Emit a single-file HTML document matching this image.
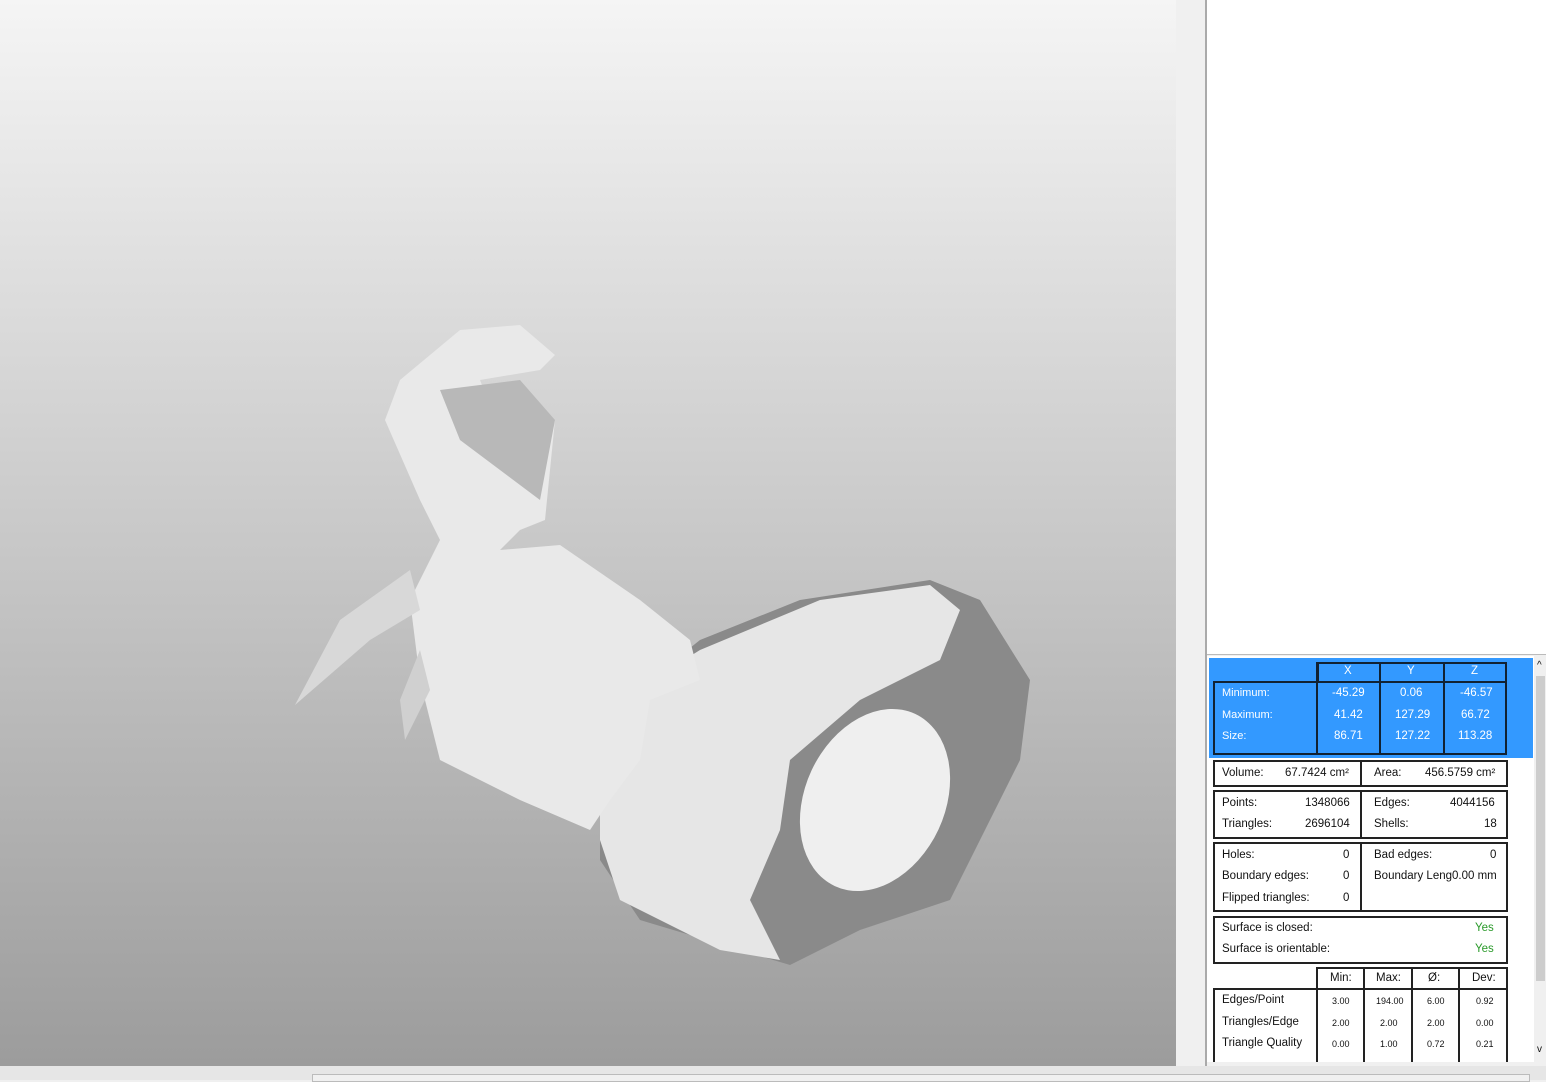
<!DOCTYPE html><html><head><style>
body{margin:0;width:1546px;height:1080px;overflow:hidden;position:relative;font-family:"Liberation Sans",sans-serif;font-size:11.5px;background:#f0f0f0}
.a{position:absolute}
.bx{position:absolute;border:2px solid #222;box-sizing:border-box;background:#fff}
.t{position:absolute;white-space:nowrap;color:#111}
.w{color:#fff}
.g{color:#2a9a2a}
.s{font-size:9px}
</style></head><body>
<div class="a" style="left:0;top:0;width:1176px;height:1066px;background:linear-gradient(#f5f5f5,#d6d6d6 35%,#9c9c9c)"></div>
<svg class="a" style="left:0;top:0" width="1176" height="1066">
<path d="M700 640 L800 600 L930 580 L980 600 L1030 680 L1020 760 L950 900 L860 930 L790 965 L640 920 L600 860 L600 760 L650 680Z" fill="#8a8a8a"/>
<path d="M620 700 L700 650 L820 600 L930 585 L960 610 L940 660 L860 700 L790 760 L780 830 L750 900 L780 960 L720 950 L620 900 L600 840 L600 760Z" fill="#e6e6e6"/>
<ellipse cx="875" cy="800" rx="70" ry="95" transform="rotate(25 875 800)" fill="#efefef"/>
<path d="M460 330 L520 325 L555 355 L540 370 L480 380 L500 430 L555 420 L545 520 L520 530 L500 550 L560 545 L640 600 L690 640 L700 680 L650 700 L640 760 L610 800 L590 830 L520 800 L440 760 L420 680 L410 600 L440 540 L420 500 L385 420 L400 380Z" fill="#e9e9e9"/>
<path d="M410 570 L340 620 L295 705 L370 640 L420 610Z" fill="#d8d8d8"/>
<path d="M420 650 L400 700 L405 740 L430 690Z" fill="#d0d0d0"/>
<path d="M440 390 L520 380 L555 420 L540 500 L500 470 L460 440Z" fill="#b8b8b8"/>
</svg>
<div class="a" style="left:1176px;top:0;width:30px;height:1066px;background:#f0f0f0"></div>
<div class="a" style="left:1205px;top:0;width:2px;height:1066px;background:#aaa"></div>
<div class="a" style="left:1207px;top:0;width:339px;height:654px;background:#fff;border-bottom:1px solid #bbb"></div>
<div class="a" style="left:1207px;top:656px;width:327px;height:406px;background:#fff"></div>
<div class="a" style="left:1534px;top:656px;width:12px;height:406px;background:#f0f0f0"></div>
<div class="a" style="left:1536px;top:676px;width:9px;height:305px;background:#cdcdcd"></div>
<div class="t" style="left:1537px;top:660px;font-size:10px">^</div>
<div class="t" style="left:1537px;top:1044px;font-size:10px">v</div>
<div class="a" style="left:0;top:1066px;width:1546px;height:14px;background:#e6e6e6"></div>
<div class="a" style="left:312px;top:1074px;width:1216px;height:6px;border:1px solid #bbb;background:#f0f0f0"></div>
<div class="a" style="left:1209px;top:658px;width:324px;height:100px;background:#3399ff"></div>
<div class="a" style="left:1317px;top:662px;width:190px;height:21px;border:2px solid #123;box-sizing:border-box"></div>
<div class="a" style="left:1213px;top:681px;width:294px;height:74px;border:2px solid #123;box-sizing:border-box"></div>
<div class="a" style="left:1316px;top:662px;width:2px;height:93px;background:#123"></div>
<div class="a" style="left:1379px;top:662px;width:2px;height:93px;background:#123"></div>
<div class="a" style="left:1443px;top:662px;width:2px;height:93px;background:#123"></div>
<div class="t w" style="left:1344px;top:665px">X</div><div class="t w" style="left:1407px;top:665px">Y</div><div class="t w" style="left:1471px;top:665px">Z</div>
<div class="t w" style="left:1222px;top:687px;font-size:11px">Minimum:</div><div class="t w" style="left:1222px;top:709px;font-size:11px">Maximum:</div><div class="t w" style="left:1222px;top:730px;font-size:11px">Size:</div>
<div class="t w" style="left:1332px;top:687px">-45.29</div><div class="t w" style="left:1400px;top:687px">0.06</div><div class="t w" style="left:1460px;top:687px">-46.57</div>
<div class="t w" style="left:1334px;top:709px">41.42</div><div class="t w" style="left:1395px;top:709px">127.29</div><div class="t w" style="left:1461px;top:709px">66.72</div>
<div class="t w" style="left:1334px;top:730px">86.71</div><div class="t w" style="left:1395px;top:730px">127.22</div><div class="t w" style="left:1458px;top:730px">113.28</div>
<div class="bx" style="left:1213px;top:760px;width:295px;height:27px"></div><div class="a" style="left:1360px;top:760px;width:2px;height:27px;background:#222"></div>
<div class="t" style="left:1222px;top:767px">Volume:</div><div class="t" style="left:1285px;top:767px">67.7424 cm²</div>
<div class="t" style="left:1374px;top:767px">Area:</div><div class="t" style="left:1425px;top:767px">456.5759 cm²</div>
<div class="bx" style="left:1213px;top:790px;width:295px;height:49px"></div><div class="a" style="left:1360px;top:790px;width:2px;height:49px;background:#222"></div>
<div class="t" style="left:1222px;top:797px">Points:</div><div class="t" style="left:1305px;top:797px">1348066</div><div class="t" style="left:1374px;top:797px">Edges:</div><div class="t" style="left:1450px;top:797px">4044156</div>
<div class="t" style="left:1222px;top:818px">Triangles:</div><div class="t" style="left:1305px;top:818px">2696104</div><div class="t" style="left:1374px;top:818px">Shells:</div><div class="t" style="left:1484px;top:818px">18</div>
<div class="bx" style="left:1213px;top:842px;width:295px;height:70px"></div><div class="a" style="left:1360px;top:842px;width:2px;height:70px;background:#222"></div>
<div class="t" style="left:1222px;top:849px">Holes:</div><div class="t" style="left:1343px;top:849px">0</div><div class="t" style="left:1374px;top:849px">Bad edges:</div><div class="t" style="left:1490px;top:849px">0</div>
<div class="t" style="left:1222px;top:870px">Boundary edges:</div><div class="t" style="left:1343px;top:870px">0</div><div class="t" style="left:1374px;top:870px">Boundary Leng0.00 mm</div>
<div class="t" style="left:1222px;top:892px">Flipped triangles:</div><div class="t" style="left:1343px;top:892px">0</div>
<div class="bx" style="left:1213px;top:916px;width:295px;height:48px"></div>
<div class="t" style="left:1222px;top:922px">Surface is closed:</div><div class="t g" style="left:1475px;top:922px">Yes</div>
<div class="t" style="left:1222px;top:943px">Surface is orientable:</div><div class="t g" style="left:1475px;top:943px">Yes</div>
<div class="a" style="left:1316px;top:967px;width:192px;height:23px;border:2px solid #222;box-sizing:border-box"></div>
<div class="a" style="left:1213px;top:988px;width:295px;height:78px;border:2px solid #222;border-bottom:none;box-sizing:border-box"></div>
<div class="a" style="left:1316px;top:967px;width:2px;height:95px;background:#222"></div>
<div class="a" style="left:1363px;top:967px;width:2px;height:95px;background:#222"></div>
<div class="a" style="left:1411px;top:967px;width:2px;height:95px;background:#222"></div>
<div class="a" style="left:1458px;top:967px;width:2px;height:95px;background:#222"></div>
<div class="t" style="left:1330px;top:972px">Min:</div><div class="t" style="left:1376px;top:972px">Max:</div><div class="t" style="left:1428px;top:972px">Ø:</div><div class="t" style="left:1472px;top:972px">Dev:</div>
<div class="t" style="left:1222px;top:994px">Edges/Point</div><div class="t s" style="left:1332px;top:996px">3.00</div><div class="t s" style="left:1376px;top:996px">194.00</div><div class="t s" style="left:1427px;top:996px">6.00</div><div class="t s" style="left:1476px;top:996px">0.92</div>
<div class="t" style="left:1222px;top:1016px">Triangles/Edge</div><div class="t s" style="left:1332px;top:1018px">2.00</div><div class="t s" style="left:1380px;top:1018px">2.00</div><div class="t s" style="left:1427px;top:1018px">2.00</div><div class="t s" style="left:1476px;top:1018px">0.00</div>
<div class="t" style="left:1222px;top:1037px">Triangle Quality</div><div class="t s" style="left:1332px;top:1039px">0.00</div><div class="t s" style="left:1380px;top:1039px">1.00</div><div class="t s" style="left:1427px;top:1039px">0.72</div><div class="t s" style="left:1476px;top:1039px">0.21</div>
<div class="a" style="left:1207px;top:1062px;width:339px;height:4px;background:#f0f0f0"></div>
</body></html>
